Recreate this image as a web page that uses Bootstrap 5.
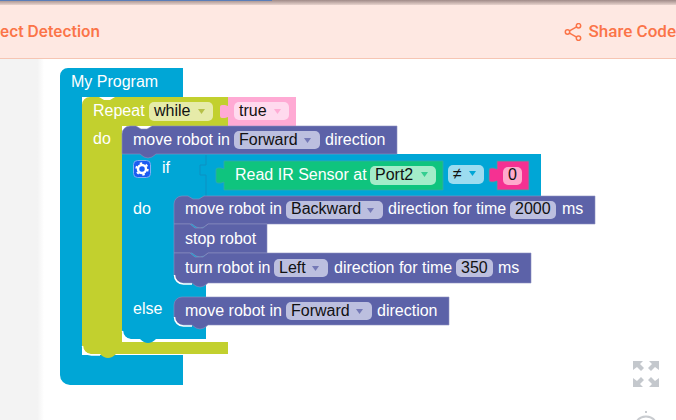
<!DOCTYPE html>
<html lang="en">
<head>
<meta charset="UTF-8">
<meta name="viewport" content="width=device-width, initial-scale=1.0">
<title>Program Editor</title>
<link rel="stylesheet" href="https://cdn.jsdelivr.net/npm/bootstrap@5.3.0/dist/css/bootstrap.min.css">
<style>
    html, body { height: 100%; overflow: hidden; background: #fff; }
    .app-frame { width: 676px; height: 420px; overflow: hidden; }
    .top-strip { height: 5px; background: linear-gradient(#a08a88, #e8d3cd); }
    .top-progress { width: 272px; height: 1px; background: #5b7db8; }
    .tool-bar { height: 54px; background: #fee8e2; border-bottom: 1px solid #f6c5b3; color: #fb7448; white-space: nowrap; }
    .tool-title { font-family: Inter, "Open Sans", sans-serif; font-weight: 600; font-size: 15.5px; }
    .share-code { font-family: Roboto, sans-serif; font-weight: 500; font-size: 17px; gap: 6px; }
    .side-rail { width: 44px; background: linear-gradient(90deg, #f3f3f3 85%, #fff); }
    .work-area { height: 361px; }
    .work-canvas { width: 632px; height: 361px; }
    .blk text { font-family: "Liberation Sans", Arial, sans-serif; font-size: 16px; fill: #fff; }
    .blk text.val { fill: #111; }
    .fld-arrow { opacity: .75; }
    .rim { fill: none; stroke: #fff; stroke-width: 1.5; }
</style>
</head>
<body>
<div class="app-frame d-flex flex-column">
    <div class="top-strip"><div class="top-progress"></div></div>
    <div class="tool-bar d-flex align-items-center justify-content-between">
        <span class="tool-title">ect Detection</span>
        <span class="share-code d-flex align-items-center">
            <svg width="18" height="18" viewBox="0 0 18 18" fill="none" stroke="#fb7448" stroke-width="1.5">
                <circle cx="3.500" cy="9" r="2.200"/><circle cx="14.500" cy="2.800" r="2.200"/><circle cx="14.500" cy="15.200" r="2.200"/>
                <path d="M5.500 7.900 12.600 3.900M5.500 10.100 12.600 14.100"/>
            </svg>
            Share Code
        </span>
    </div>
    <div class="work-area d-flex">
        <div class="side-rail"></div>
        <!-- viewBox uses page coordinates so the block numbers can be read off the screenshot -->
        <svg class="work-canvas blk" viewBox="44 59 632 361">
            <!-- root -->
            <path fill="#00a6d6" d="M60 76a8 8 0 0 1 8-8H183V97H82V355H183V385H70a10 10 0 0 1-10-10Z"/>
            <text x="71" y="87">My Program</text>

            <!-- repeat -->
            <path fill="#c2d02e" d="M82 105a8 8 0 0 1 8-8h9l5 3h6l5-3H228V126H122V342H228V354H116q-4 4-8 4t-8-4H91a9 9 0 0 1-9-9Z"/>
            <path class="rim" d="M82.500 346a9 9 0 0 0 9 9H100"/>
            <text x="93" y="116">Repeat</text>
            <rect x="149" y="102" width="64" height="19" rx="5" fill="#e6eba9"/>
            <text class="val" x="154" y="116">while</text>
            <path class="fld-arrow" fill="#a5b228" d="M198 109h7l-3.500 5Z"/>
            <text x="93" y="144">do</text>

            <!-- true -->
            <path fill="#ffaad4" d="M228 97H296V126H228V117l-3 1h-3a2 2 0 0 1-2-2V107a2 2 0 0 1 2-2h3l3 1Z"/>
            <rect x="234" y="102" width="55" height="18" rx="5" fill="#ffdaee"/>
            <text class="val" x="239" y="116">true</text>
            <path class="fld-arrow" fill="#ff9ccc" d="M274 109h7l-3.500 5Z"/>

            <!-- if -->
            <path fill="#00a6d6" d="M122 154H541V196H206V339H156q-4 4-8 4t-8-4H131a9 9 0 0 1-9-9Z"/>
            <path class="rim" d="M122.500 331a9 9 0 0 0 9 9H140"/>
            <path fill="none" stroke="#0c90c2" d="M206 155V165h-6v10h6V196"/>
            <rect x="133.500" y="160.500" width="17" height="17" rx="4" fill="#1b5cf2" stroke="#7fb2f5"/>
            <circle cx="142" cy="169" r="4" fill="none" stroke="#fff" stroke-width="2.500"/>
            <circle cx="142" cy="169" r="5.800" fill="none" stroke="#fff" stroke-width="1.800" stroke-dasharray="2.400 3.700"/>
            <text x="162" y="173">if</text>
            <text x="133" y="214">do</text>
            <text x="133" y="314">else</text>

            <!-- move forward -->
            <path fill="#5c62a8" stroke="#8d90bf" stroke-width=".6" d="M122 134a8 8 0 0 1 8-8h6l5 3h6l5-3H397V154H156q-4 4-8 4t-8-4H122Z"/>
            <text x="133" y="145">move robot in</text>
            <rect x="234" y="131" width="86" height="18" rx="5" fill="#bcbfdf"/>
            <text class="val" x="239" y="145">Forward</text>
            <path class="fld-arrow" fill="#5c62a8" d="M304 138h7l-3.500 5Z"/>
            <text x="325" y="145">direction</text>

            <!-- read IR -->
            <path fill="#0fc47e" stroke="#33a9a8" stroke-width=".8" d="M224 161H443V190H224V182l-3 1h-3a2 2 0 0 1-2-2V170a2 2 0 0 1 2-2h3l3 1Z"/>
            <text x="235" y="180">Read IR Sensor at</text>
            <rect x="370" y="166" width="66" height="19" rx="5" fill="#a3ecc9"/>
            <text class="val" x="375" y="180">Port2</text>
            <path class="fld-arrow" fill="#0fc47e" d="M421 172h7l-3.500 5Z"/>
            <rect x="448" y="165" width="36" height="19" rx="5" fill="#9cdcf0"/>
            <text class="val" x="453" y="179">≠</text>
            <path fill="#00a6d6" d="M469 171h7l-3.500 5Z"/>
            <path fill="#f53192" stroke="#33a9a8" stroke-width=".8" d="M497 161H529V190H497V181l-3 1h-3a2 2 0 0 1-2-2V170a2 2 0 0 1 2-2h3l3 1Z"/>
            <rect x="503" y="167" width="19" height="18" rx="5" fill="#ffaacc"/>
            <text class="val" x="508" y="180">0</text>

            <!-- then stack -->
            <path fill="#5c62a8" stroke="#8d90bf" stroke-width=".6" d="M174 204a8 8 0 0 1 8-8h6l5 3h6l5-3H595V224H208q-4 4-8 4t-8-4H174Z"/>
            <text x="185" y="214">move robot in</text>
            <rect x="286" y="201" width="97" height="18" rx="5" fill="#bcbfdf"/>
            <text class="val" x="291" y="214">Backward</text>
            <path class="fld-arrow" fill="#5c62a8" d="M367 208h7l-3.500 5Z"/>
            <text x="388" y="214">direction for time</text>
            <rect x="510" y="201" width="46" height="18" rx="5" fill="#bcbfdf"/>
            <text class="val" x="515" y="214">2000</text>
            <text x="562" y="214">ms</text>

            <path fill="#5c62a8" stroke="#8d90bf" stroke-width=".6" d="M174 224H190l5 4h8l5-4H267V253H208q-4 4-8 4t-8-4H174Z"/>
            <text x="185" y="244">stop robot</text>

            <path fill="#5c62a8" stroke="#8d90bf" stroke-width=".6" d="M174 253H190l5 4h8l5-4H531V283H208q-4 4-8 4t-8-4H183a9 9 0 0 1-9-9Z"/>
            <path class="rim" d="M174.500 275a9 9 0 0 0 9 9H192"/>
            <text x="185" y="273">turn robot in</text>
            <rect x="274" y="259" width="54" height="18" rx="5" fill="#bcbfdf"/>
            <text class="val" x="279" y="273">Left</text>
            <path class="fld-arrow" fill="#5c62a8" d="M312 266h7l-3.500 5Z"/>
            <text x="334" y="273">direction for time</text>
            <rect x="456" y="259" width="37" height="18" rx="5" fill="#bcbfdf"/>
            <text class="val" x="461" y="273">350</text>
            <text x="498" y="273">ms</text>

            <!-- else stack -->
            <path fill="#5c62a8" stroke="#8d90bf" stroke-width=".6" d="M174 305a8 8 0 0 1 8-8H449V325H208q-4 4-8 4t-8-4H183a9 9 0 0 1-9-9Z"/>
            <path class="rim" d="M174.500 317a9 9 0 0 0 9 9H192"/>
            <text x="185" y="316">move robot in</text>
            <rect x="286" y="302" width="86" height="18" rx="5" fill="#bcbfdf"/>
            <text class="val" x="291" y="316">Forward</text>
            <path class="fld-arrow" fill="#5c62a8" d="M356 309h7l-3.500 5Z"/>
            <text x="377" y="316">direction</text>

            <!-- zoom controls -->
            <g fill="#c4c8cd">
                <path d="M633 361h10l-3 3 4 4-3 3-4-4-4 3Z"/>
                <path d="M659 361h-10l3 3-4 4 3 3 4-4 4 3Z"/>
                <path d="M633 387h10l-3-3 4-4-3-3-4 4-4-3Z"/>
                <path d="M659 387h-10l3-3-4-4 3-3 4 4 4-3Z"/>
            </g>
            <path fill="none" stroke="#c9ccd0" stroke-width="2" d="M637 421a10 8 0 0 1 18 0M646 413V411"/>
        </svg>
    </div>
</div>
<script src="https://cdn.jsdelivr.net/npm/bootstrap@5.3.0/dist/js/bootstrap.bundle.min.js"></script>
</body>
</html>
